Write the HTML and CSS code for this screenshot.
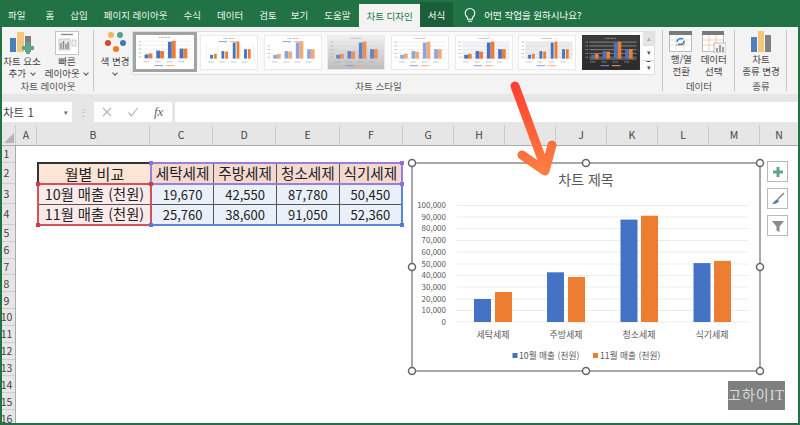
FILE: index.html
```html
<!DOCTYPE html>
<html lang="ko">
<head>
  <meta charset="UTF-8">
  <title>차트 디자인</title>
  <link rel="stylesheet" href="styles.css">
</head>
<body>
  <svg class="defs" width="0" height="0">
    <defs>
      <!-- 갤러리 미리보기 막대 -->
      <symbol id="bars" viewBox="0 0 58 35">
        <g class="b1"><rect x="8" y="20" width="4" height="4"/><rect x="20" y="16" width="4" height="8"/><rect x="32" y="7" width="4" height="17"/><rect x="44" y="14" width="4" height="10"/></g>
        <g class="b2"><rect x="12" y="19" width="4" height="5"/><rect x="24" y="16.5" width="4" height="7.5"/><rect x="36" y="6" width="4" height="18"/><rect x="48" y="14" width="4" height="10"/></g>
      </symbol>
      <symbol id="bars-thin" viewBox="0 0 58 35">
        <g class="b1"><rect x="9" y="20" width="3" height="4"/><rect x="21" y="16" width="3" height="8"/><rect x="33" y="7" width="3" height="17"/><rect x="45" y="14" width="3" height="10"/></g>
        <g class="b2"><rect x="13" y="19" width="3" height="5"/><rect x="25" y="16.5" width="3" height="7.5"/><rect x="37" y="6" width="3" height="18"/><rect x="49" y="14" width="3" height="10"/></g>
      </symbol>
      <symbol id="grid" viewBox="0 0 58 35">
        <path class="grid-line" d="M6 6.5H56M6 10.5H56M6 14.5H56M6 18.5H56M6 22.5H56M6 24.5H56"/>
        <path class="axis-ticks" d="M2 6.5H5M2 10.5H5M2 14.5H5M2 18.5H5M2 22.5H5"/>
      </symbol>
      <symbol id="captions" viewBox="0 0 58 35">
        <path class="caption" d="M23 2.5H35"/>
        <path class="caption" d="M7 27.5H13M19 27.5H25M31 27.5H37M43 27.5H49"/>
      </symbol>
      <symbol id="legend-low" viewBox="0 0 58 35">
        <path class="lg1" d="M18 31.5H27"/><path class="lg2" d="M30 31.5H39"/>
      </symbol>
      <symbol id="legend-top" viewBox="0 0 58 35">
        <path class="lg1" d="M18 6H27"/><path class="lg2" d="M30 6H39"/>
      </symbol>
    </defs>
  </svg>

  <nav class="tabs">
    <span class="tab first">파일</span>
    <span class="tab">홈</span>
    <span class="tab">삽입</span>
    <span class="tab">페이지 레이아웃</span>
    <span class="tab">수식</span>
    <span class="tab">데이터</span>
    <span class="tab">검토</span>
    <span class="tab view">보기</span>
    <span class="tab">도움말</span>
    <span class="tab active">차트 디자인</span>
    <span class="tab context">서식</span>
    <span class="tell-me">
      <svg width="14" height="16" viewBox="0 0 14 16"><path d="M4.5 10.5C3 9.3 2.2 8 2.2 6.3a4.8 4.8 0 0 1 9.6 0c0 1.7-.8 3-2.3 4.2v1.7h-5zM5 14.2h4" fill="none" stroke="#fff" stroke-width="1.1"/></svg>
      어떤 작업을 원하시나요?
    </span>
  </nav>

  <section class="ribbon">
    <div class="group group-layout">
      <div class="group-main">
        <div class="cmd cmd-add">
          <svg width="26" height="24" viewBox="0 0 26 24">
            <rect x="1" y="7" width="6" height="14" fill="#4a7ebb"/>
            <rect x="8" y="1" width="7" height="20" fill="#f2c879"/>
            <rect x="16" y="5" width="6" height="16" fill="#7f7f7f"/>
            <path d="M19 11v12M13 17h12" stroke="#5fa58c" stroke-width="4"/>
          </svg>
          <span>차트 요소<br>추가 <i class="caret"></i></span>
        </div>
        <div class="cmd cmd-quick">
          <svg width="24" height="24" viewBox="0 0 24 24">
            <rect x=".5" y=".5" width="23" height="23" fill="#fff" stroke="#c4c4c4"/>
            <path d="M6 3.5h12" stroke="#8d8d8d" stroke-width="1.4"/>
            <rect x="4" y="8" width="11" height="11" fill="#e9e9e9" stroke="#b0b0b0" stroke-width=".6"/>
            <path d="M6 18v-6M8.5 18v-8M11 18v-5M13 18v-7" stroke="#888" stroke-width="1.4"/>
            <rect x="17" y="9" width="4" height="6" fill="#f4f4f4" stroke="#aaa" stroke-width=".6"/>
          </svg>
          <span>빠른<br>레이아웃 <i class="caret"></i></span>
        </div>
      </div>
      <div class="group-label">차트 레이아웃</div>
    </div>

    <div class="group group-style">
      <div class="group-main">
        <div class="cmd cmd-color">
          <svg width="24" height="24" viewBox="0 0 24 24">
            <circle cx="8" cy="4" r="3" fill="#f0b75a"/>
            <circle cx="17" cy="4" r="3" fill="#5a9e8f"/>
            <circle cx="5" cy="12" r="3" fill="#d9432f"/>
            <circle cx="20" cy="12" r="3" fill="#3f78b5"/>
            <circle cx="13" cy="18" r="3" fill="#ee7a22"/>
          </svg>
          <span>색 변경<br><i class="caret"></i></span>
        </div>
        <div class="gallery">
          <div class="thumb selected">
            <svg viewBox="0 0 58 35"><use href="#grid"/><use href="#captions"/><use href="#bars"/><use href="#legend-low"/></svg>
          </div>
          <div class="thumb">
            <svg viewBox="0 0 58 35"><path class="grid-line" d="M5 9V26M17 9V26M29 9V26M41 9V26M55 9V26"/><use href="#captions"/><use href="#legend-top"/><use href="#bars-thin"/></svg>
          </div>
          <div class="thumb light">
            <svg viewBox="0 0 58 35"><use href="#captions"/><use href="#legend-top"/><path class="axis-ticks" d="M2 10.5H5M2 14.5H5M2 18.5H5M2 22.5H5"/><use href="#bars"/></svg>
          </div>
          <div class="thumb metal">
            <svg viewBox="0 0 58 35"><use href="#grid"/><use href="#captions"/><use href="#bars"/><use href="#legend-low"/></svg>
          </div>
          <div class="thumb light">
            <svg viewBox="0 0 58 35"><use href="#grid"/><use href="#captions"/><use href="#bars"/><use href="#legend-low"/></svg>
          </div>
          <div class="thumb tint">
            <svg viewBox="0 0 58 35"><rect x="6" y="6" width="50" height="18" fill="#f1f4fa"/><use href="#grid"/><use href="#captions"/><use href="#bars"/><use href="#legend-low"/></svg>
          </div>
          <div class="thumb">
            <svg viewBox="0 0 58 35"><rect x="6" y="6" width="50" height="18" fill="#ececec"/><use href="#grid"/><use href="#captions"/><use href="#bars-thin"/><use href="#legend-low"/></svg>
          </div>
          <div class="thumb dark">
            <svg viewBox="0 0 58 35"><use href="#grid"/><use href="#captions"/><use href="#bars"/><use href="#legend-low"/></svg>
          </div>
          <div class="gallery-scroll">
            <span class="off">▴</span>
            <span>▾</span>
            <span class="more">▾</span>
          </div>
        </div>
      </div>
      <div class="group-label">차트 스타일</div>
    </div>

    <div class="group group-data">
      <div class="group-main">
        <div class="cmd">
          <svg width="24" height="22" viewBox="0 0 24 22">
            <rect x=".5" y=".5" width="22" height="20" fill="#fff" stroke="#bbb"/>
            <rect x="0" y="0" width="23" height="4" fill="#7a7a7a"/>
            <path d="M1 9h21M1 14h21M7 4v17M15 4v17" stroke="#ddd" stroke-width=".8"/>
            <path d="M7 14h8M15 9v5" stroke="#ef9b5c" stroke-width="1"/>
            <path d="M8 11c0-3 3-4 6-3M15 10c0 3-3 4-6 3" fill="none" stroke="#2f80c8" stroke-width="1.5"/>
          </svg>
          <span>행/열<br>전환</span>
        </div>
        <div class="cmd">
          <svg width="24" height="22" viewBox="0 0 24 22">
            <rect x=".5" y=".5" width="21" height="20" fill="#fff" stroke="#bbb"/>
            <rect x="0" y="0" width="22" height="4" fill="#7a7a7a"/>
            <path d="M1 9h20M1 14h20M7 4v17M14 4v17" stroke="#f0c09a" stroke-width=".8"/>
            <rect x="12" y="12" width="12" height="10" fill="#f3f3f3" stroke="#aaa" stroke-width=".7"/>
            <path d="M15 21v-4M18 21v-7M21 21v-5" stroke="#8a8a8a" stroke-width="1.6"/>
          </svg>
          <span>데이터<br>선택</span>
        </div>
      </div>
      <div class="group-label">데이터</div>
    </div>

    <div class="group group-type">
      <div class="group-main">
        <div class="cmd">
          <svg width="24" height="22" viewBox="0 0 24 22">
            <rect x="2" y="6" width="6" height="15" fill="#4f81bd"/>
            <rect x="9" y="0" width="6" height="21" fill="#f4c77b"/>
            <rect x="16" y="4" width="6" height="17" fill="#808080"/>
          </svg>
          <span>차트<br>종류 변경</span>
        </div>
      </div>
      <div class="group-label">종류</div>
    </div>
  </section>

  <div class="ribbon-gap"></div>

  <div class="formula-bar">
    <div class="name-box">차트 1<i class="name-caret">▾</i></div>
    <div class="grip">⋮</div>
    <div class="fx-box">
      <svg width="12" height="12" viewBox="0 0 12 12"><path d="M2 2l8 8M10 2l-8 8" stroke="#b5b5b5" stroke-width="1.2"/></svg>
      <svg width="12" height="12" viewBox="0 0 12 12"><path d="M1.5 6.5l3 3.5 6-8" fill="none" stroke="#b5b5b5" stroke-width="1.2"/></svg>
      <em>fx</em>
    </div>
    <div class="formula-input"></div>
  </div>

  <div class="col-head">
    <div class="corner"><svg width="10" height="10" viewBox="0 0 10 10"><path d="M10 0V10H0z" fill="#b4b4b4"/></svg></div>
    <div>A</div><div>B</div><div>C</div><div>D</div><div>E</div><div>F</div>
    <div>G</div><div>H</div><div>I</div><div>J</div><div>K</div><div>L</div><div>M</div><div>N</div>
  </div>

  <main class="sheet">
    <div class="row-head">
      <div>1</div><div>2</div><div>3</div><div>4</div><div>5</div><div>6</div><div>7</div><div>8</div>
      <div>9</div><div>10</div><div>11</div><div>12</div><div>13</div><div>14</div><div>15</div><div>16</div>
    </div>
    <div class="cells">
      <table class="data-table">
        <tr>
          <th class="title-cell">월별 비교</th>
          <th class="item"><i class="dot p tl"></i><i class="dot p bl"></i>세탁세제</th>
          <th class="item">주방세제</th>
          <th class="item">청소세제</th>
          <th class="item"><i class="dot p tr"></i><i class="dot p br"></i>식기세제</th>
        </tr>
        <tr>
          <td class="label top"><i class="dot r tl"></i><i class="dot r tr"></i>10월 매출 (천원)</td>
          <td class="num">19,670</td><td class="num">42,550</td><td class="num">87,780</td><td class="num">50,450</td>
        </tr>
        <tr>
          <td class="label bottom"><i class="dot r bl"></i><i class="dot r br"></i>11월 매출 (천원)</td>
          <td class="num end"><i class="dot b bl"></i>25,760</td><td class="num end">38,600</td><td class="num end">91,050</td><td class="num end"><i class="dot b br"></i>52,360</td>
        </tr>
      </table>

      <div class="chart">
        <svg width="360" height="220" viewBox="-4 -4 360 220">
          <rect class="chart-frame" x="2" y="2" width="348" height="208"/>
          <text class="chart-title" x="176" y="24">차트 제목</text>
          <path class="gridlines" d="M46.5 44.5H338M46.5 56H338M46.5 67.5H338M46.5 79.5H338M46.5 91H338M46.5 103H338M46.5 114.5H338M46.5 126H338M46.5 138H338M46.5 149.5H338M46.5 161H338"/>
          <g class="y-labels">
            <text x="36" y="47">100,000</text><text x="36" y="58.7">90,000</text><text x="36" y="70.4">80,000</text>
            <text x="36" y="82">70,000</text><text x="36" y="93.8">60,000</text><text x="36" y="105.5">50,000</text>
            <text x="36" y="117.2">40,000</text><text x="36" y="129">30,000</text><text x="36" y="140.6">20,000</text>
            <text x="36" y="152.3">10,000</text><text x="36" y="164">0</text>
          </g>
          <g class="bar-blue">
            <rect x="64" y="138" width="17" height="23"/><rect x="137" y="111.3" width="17" height="49.7"/>
            <rect x="210.5" y="58.6" width="17" height="102.4"/><rect x="283.5" y="102.1" width="17" height="58.9"/>
          </g>
          <g class="bar-orange">
            <rect x="85" y="131" width="17" height="30"/><rect x="158" y="116" width="17" height="45"/>
            <rect x="231" y="54.7" width="17" height="106.3"/><rect x="304" y="99.9" width="17" height="61.1"/>
          </g>
          <g class="cat-labels">
            <text x="83" y="177">세탁세제</text><text x="156" y="177">주방세제</text>
            <text x="229" y="177">청소세제</text><text x="302" y="177">식기세제</text>
          </g>
          <rect class="fill-blue" x="102.5" y="192" width="5" height="5"/>
          <text class="legend-text" x="109" y="198">10월 매출 (천원)</text>
          <rect class="fill-orange" x="183" y="192" width="5" height="5"/>
          <text class="legend-text" x="190" y="198">11월 매출 (천원)</text>
          <g class="handles">
            <circle cx="2" cy="2" r="3.5"/><circle cx="176" cy="2" r="3.5"/><circle cx="350" cy="2" r="3.5"/>
            <circle cx="2" cy="106" r="3.5"/><circle cx="350" cy="106" r="3.5"/>
            <circle cx="2" cy="210" r="3.5"/><circle cx="176" cy="210" r="3.5"/><circle cx="350" cy="210" r="3.5"/>
          </g>
        </svg>
      </div>

      <div class="chart-tools">
        <div><svg width="12" height="12" viewBox="0 0 12 12"><path d="M6 1v10M1 6h10" stroke="#5fa58c" stroke-width="3"/></svg></div>
        <div><svg width="14" height="14" viewBox="0 0 14 14"><path d="M13 1L6 8" stroke="#8a8a8a" stroke-width="1.6"/><path d="M6.5 7.5L8 9C6 12 3 12 1 12c1.5-1 2-2 2.5-3z" fill="#4a7ebb"/></svg></div>
        <div><svg width="14" height="14" viewBox="0 0 14 14"><path d="M1 2h12L8.5 7.500V13l-3-1.500V7.500z" fill="#8a8a8a"/></svg></div>
      </div>

      <div class="watermark">고하이IT</div>
    </div>
  </main>

  <svg class="arrow" width="64" height="108" viewBox="0 0 64 108">
    <defs>
      <linearGradient id="arrow-fade" gradientUnits="userSpaceOnUse" x1="10" y1="5" x2="40" y2="95">
        <stop offset="0" stop-color="#ff3d30"/>
        <stop offset="1" stop-color="#ff7d42"/>
      </linearGradient>
    </defs>
    <path d="M11 11L40 90M18 80L41 96L48 70" fill="none" stroke="url(#arrow-fade)" stroke-width="9" stroke-linecap="round" stroke-linejoin="round"/>
  </svg>
</body>
</html>
```

FILE: styles.css
```css
/* 기본 */
* {
  box-sizing: border-box;
}

html, body {
  margin: 0;
  height: 100%;
}

body {
  position: relative;
  width: 800px;
  height: 425px;
  padding: 0 2px 2px;
  overflow: hidden;
  background-color: #217346;
  color: #444;
  font-family: "Noto Sans CJK KR", "Noto Sans", sans-serif;
  font-size: 9.5px;
}

.defs {
  position: absolute;
}

/* 탭 */
.tabs {
  display: flex;
  align-items: flex-end;
  height: 27px;
  color: #fff;
}

.tab {
  display: flex;
  align-items: center;
  height: 27px;
  padding: 2px 8px 0;
  white-space: nowrap;
  opacity: .92;
}

.tab.first {
  padding-left: 6px;
  padding-right: 12px;
}

.tab.view {
  margin-left: -2px;
}

.tab.active {
  height: 23px;
  margin-left: 1px;
  padding: 0 7px;
  background-color: #f3f3f3;
  color: #217346;
  opacity: 1;
}

.tab.context {
  height: 25px;
  padding: 0 8px;
  background-color: #1b5e3a;
  opacity: 1;
}

.tell-me {
  display: flex;
  align-items: center;
  gap: 7px;
  height: 27px;
  padding: 2px 0 0 10px;
  white-space: nowrap;
}

/* 리본 */
.ribbon {
  display: flex;
  height: 67px;
  background-color: #f3f3f3;
}

.group {
  display: flex;
  flex-direction: column;
  position: relative;
  padding-top: 3px;
}

.group::after {
  content: "";
  position: absolute;
  top: 3px;
  right: 0;
  bottom: 3px;
  border-right: 1px solid #c6c6c6;
}

.group-layout { width: 92px; }
.group-style { width: 569px; }
.group-data { width: 72px; }
.group-type { width: 52px; }

.group-data .group-main {
  padding: 0 5px 0 2px;
}

.group-main {
  display: flex;
  flex: 1;
  min-height: 0;
}

.group-label {
  height: 14px;
  text-align: center;
  line-height: 13px;
  color: #555;
}

.cmd {
  display: flex;
  flex-direction: column;
  align-items: center;
  flex: 1;
  padding-top: 1px;
  line-height: 12px;
  text-align: center;
  white-space: nowrap;
}

.cmd svg {
  flex: none;
}

.cmd-add { flex: none; width: 40px; }
.cmd-quick { flex: none; width: 50px; }
.cmd-color { flex: none; width: 42px; }

.caret {
  display: inline-block;
  width: 4px;
  height: 4px;
  margin: 0 1px 2px 2px;
  border-right: 1px solid #555;
  border-bottom: 1px solid #555;
  transform: rotate(45deg);
}

/* 스타일 갤러리 */
.gallery {
  display: flex;
  align-items: flex-start;
  gap: 5.67px;
  position: relative;
  width: 523px;
  height: 44px;
  margin: 1px 0 0 -4px;
  padding-top: 3px;
  background-color: #fafafa;
  border: 1px solid #dedede;
}

.thumb {
  flex: none;
  width: 58px;
  height: 35px;
  background-color: #fff;
  border: 1px solid #eaeaea;
}

.thumb svg {
  display: block;
  width: 100%;
  height: 100%;
}

.thumb.selected {
  width: 64px;
  height: 40px;
  margin: -3px -2.67px 0 0;
  border: 3px solid #a3a3a3;
}

.b1 { fill: var(--blue, #4472c4); }
.b2 { fill: var(--orange, #ed7d31); }

.thumb.light {
  --blue: #8aa7dc;
  --orange: #f4a978;
}

.thumb.metal {
  background: linear-gradient(#f0f0f0, #bdbdbd);
  --blue: #5c82cc;
  --orange: #ef8f52;
}

.thumb.tint {
  --blue: #4472c4;
}

.thumb.dark {
  background: linear-gradient(#3c3c3c, #2a2a2a);
  border-color: #333;
}

.grid-line {
  fill: none;
  stroke: #dcdcdc;
  stroke-width: .5;
}

.axis-ticks,
.caption {
  fill: none;
  stroke: #a8a8a8;
  stroke-width: 1;
  stroke-dasharray: 1 .5;
}

.lg1 { stroke: #7a9ad6; stroke-width: 1; }
.lg2 { stroke: #f2ab7c; stroke-width: 1; }

.thumb.dark .grid-line { stroke: #5e5e5e; }
.thumb.dark .axis-ticks,
.thumb.dark .caption { stroke: #9a9a9a; }
.thumb.metal .grid-line { stroke: #9f9f9f; }
.thumb.metal .caption { stroke: #707070; }

.gallery-scroll {
  position: absolute;
  top: 0;
  right: 0;
  display: flex;
  flex-direction: column;
  gap: 1px;
  width: 11px;
  height: 42px;
  background-color: #dedede;
}

.gallery-scroll span {
  flex: 1;
  display: flex;
  align-items: center;
  justify-content: center;
  background-color: #fff;
  font-size: 7px;
  line-height: 1;
  color: #555;
}

.gallery-scroll .off {
  background-color: #e4e4e4;
  color: #aaa;
}

.gallery-scroll .more {
  text-decoration: overline;
}

.ribbon-gap {
  height: 8px;
  background-color: #e6e6e6;
}

/* 수식 입력줄 */
.formula-bar {
  display: flex;
  height: 23px;
  padding-bottom: 3px;
  background-color: #e6e6e6;
}

.name-box {
  display: flex;
  align-items: center;
  justify-content: space-between;
  width: 70px;
  padding: 0 4px 0 1px;
  background-color: #fff;
  font-size: 11.5px;
  color: #444;
}

.name-caret {
  font-size: 7px;
  font-style: normal;
  color: #666;
}

.grip {
  width: 22px;
  text-align: center;
  line-height: 20px;
  font-size: 11px;
  color: #aaa;
}

.fx-box {
  display: flex;
  align-items: center;
  gap: 14px;
  width: 78px;
  padding-left: 7px;
  background-color: #fff;
}

.fx-box em {
  margin-left: 1px;
  font-family: "Liberation Serif", serif;
  font-size: 13px;
  color: #666;
}

.formula-input {
  flex: 1;
  margin-left: 3px;
  background-color: #fff;
}

/* 열 머리글 */
.col-head {
  display: grid;
  grid-template-columns: 14px 21px 113px 63px 63px 64px 63px 51px 51px 51px 51px 51px 51px 51px 38px;
  height: 21px;
  background-color: #e6e6e6;
  border-bottom: 1px solid #ababab;
  text-align: center;
  line-height: 19px;
  font-size: 10.5px;
  color: #444;
}

.col-head > div {
  border-right: 1px solid #cdcdcd;
}

.col-head > div:last-child {
  border-right: 0;
}

.corner {
  display: flex;
  justify-content: flex-end;
  align-items: flex-end;
  padding: 0 1px 2px 0;
}

/* 시트 */
.sheet {
  display: flex;
  height: 277px;
  overflow: hidden;
}

.row-head {
  flex: none;
  width: 14px;
  background-color: #e6e6e6;
  border-right: 1px solid #ababab;
  font-size: 10.5px;
  color: #444;
}

.row-head > div {
  display: flex;
  justify-content: center;
  align-items: center;
  height: 16.85px;
  padding-right: 4px;
  border-bottom: 1px solid #cdcdcd;
}

.row-head > div:nth-child(2),
.row-head > div:nth-child(4) {
  height: 21px;
}

.row-head > div:nth-child(3) {
  height: 20px;
}

.cells {
  position: relative;
  flex: 1;
  background-color: #fff;
}

/* 표 */
.data-table {
  width: 366px;
  margin: 16px 0 0 21px;
  table-layout: fixed;
  border-collapse: collapse;
  color: #222;
}

.data-table th,
.data-table td {
  position: relative;
  padding: 0;
  text-align: center;
  font-weight: 400;
  line-height: 1;
  white-space: nowrap;
}

.data-table th {
  height: 21px;
  font-size: 14.6px;
}

.data-table td {
  height: 20.5px;
  font-size: 13px;
}

.data-table .title-cell {
  width: 113px;
  background-color: #fce4d6;
  border-top: 2px solid #333;
  border-left: 2px solid #333;
  border-bottom: 2px solid #d4505a;
  font-size: 15px;
}

.data-table .item {
  background-color: #f3d9d0;
  border: 1px solid #555;
  border-top: 2px solid #9a7fd6;
  border-bottom: 2px solid #9a7fd6;
}

.data-table .item:nth-child(2) {
  border-left: 2px solid #9a7fd6;
}

.data-table .item:last-child {
  border-right: 2px solid #9a7fd6;
}

.data-table .label {
  background-color: #fbeaea;
  border-left: 2px solid #d4505a;
  border-right: 2px solid #d4505a;
  font-size: 14.3px;
}

.data-table .label.top {
  border-bottom: 1px solid #555;
}

.data-table .label.bottom {
  border-bottom: 2px solid #d4505a;
}

.data-table .num {
  background-color: #e9f0fa;
  border: 1px solid #555;
  border-top: 0;
}

.data-table .num:last-child {
  border-right: 2px solid #5b86d8;
}

.data-table .num.end {
  border-bottom: 2px solid #5b86d8;
}

.dot {
  position: absolute;
  width: 4px;
  height: 4px;
  z-index: 1;
}

.dot.p { background-color: #8e6fd2; }
.dot.r { background-color: #d23c4a; }
.dot.b { background-color: #4a7fdc; }
.dot.tl { left: -3px; top: -3px; }
.dot.tr { right: -3px; top: -3px; }
.dot.bl { left: -3px; bottom: -3px; }
.dot.br { right: -3px; bottom: -3px; }

/* 차트 */
.chart {
  position: absolute;
  left: 390px;
  top: 11px;
  width: 360px;
  height: 220px;
}

.chart svg {
  display: block;
}

.chart-frame {
  fill: #fff;
  stroke: #8c8c8c;
  stroke-width: 1.5;
}

.chart-title {
  font-size: 14px;
  fill: #595959;
  text-anchor: middle;
}

.gridlines {
  fill: none;
  stroke: #ececec;
  stroke-width: 1;
}

.y-labels text {
  font-size: 8px;
  fill: #595959;
  text-anchor: end;
}

.bar-blue, .fill-blue { fill: #4472c4; }
.bar-orange, .fill-orange { fill: #ed7d31; }

.cat-labels text {
  font-size: 9px;
  fill: #595959;
  text-anchor: middle;
}

.legend-text {
  font-size: 8.7px;
  fill: #595959;
}

.handles circle {
  fill: #fff;
  stroke: #666;
  stroke-width: 1.5;
}

.chart-tools {
  position: absolute;
  left: 751px;
  top: 15px;
  display: flex;
  flex-direction: column;
  gap: 6px;
}

.chart-tools > div {
  display: flex;
  align-items: center;
  justify-content: center;
  width: 21px;
  height: 21px;
  background-color: #fff;
  border: 1px solid #b8b8b8;
}

.watermark {
  position: absolute;
  left: 712px;
  top: 235px;
  width: 57px;
  height: 29px;
  background-color: #7f7f7f;
  color: #dcdcdc;
  font-family: "Liberation Serif", "Noto Sans CJK KR", serif;
  font-size: 14px;
  line-height: 29px;
  text-align: center;
  letter-spacing: 1px;
  white-space: nowrap;
}

/* 화살표 */
.arrow {
  position: absolute;
  left: 504px;
  top: 75px;
}
```
